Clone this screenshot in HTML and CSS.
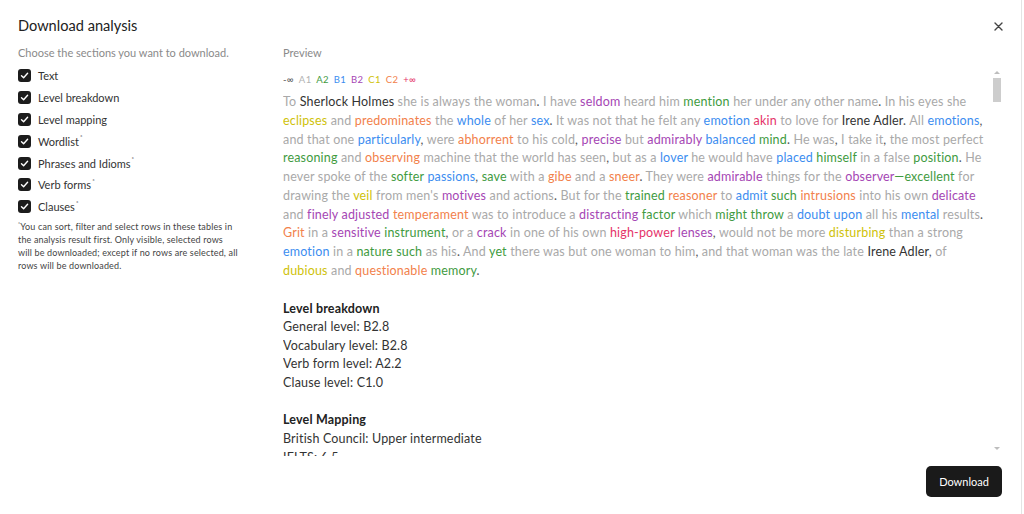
FILE: index.html
```html
<!DOCTYPE html>
<html lang="en">
<head>
<meta charset="utf-8">
<title>Download analysis</title>
<link rel="stylesheet" href="styles.css">
</head>
<body>
<div class="modal">
  <header class="head">
    <h1 class="title">Download analysis</h1>
    <button class="close" aria-label="Close">
      <svg width="9" height="9" viewBox="0 0 9 9"><path d="M1 1L8 8M8 1L1 8" stroke="#444" stroke-width="1.4" stroke-linecap="round"/></svg>
    </button>
  </header>
  <div class="body">
    <aside class="left">
      <p class="hint">Choose the sections you want to download.</p>
      <ul class="checks">
        <li><span class="box"><svg width="9" height="9" viewBox="0 0 9 9"><path d="M1.5 4.7L3.6 6.7L7.6 2.3" fill="none" stroke="#fff" stroke-width="1.4" stroke-linecap="round" stroke-linejoin="round"/></svg></span>Text</li>
        <li><span class="box"><svg width="9" height="9" viewBox="0 0 9 9"><path d="M1.5 4.7L3.6 6.7L7.6 2.3" fill="none" stroke="#fff" stroke-width="1.4" stroke-linecap="round" stroke-linejoin="round"/></svg></span>Level breakdown</li>
        <li><span class="box"><svg width="9" height="9" viewBox="0 0 9 9"><path d="M1.5 4.7L3.6 6.7L7.6 2.3" fill="none" stroke="#fff" stroke-width="1.4" stroke-linecap="round" stroke-linejoin="round"/></svg></span>Level mapping</li>
        <li><span class="box"><svg width="9" height="9" viewBox="0 0 9 9"><path d="M1.5 4.7L3.6 6.7L7.6 2.3" fill="none" stroke="#fff" stroke-width="1.4" stroke-linecap="round" stroke-linejoin="round"/></svg></span>Wordlist<sup>*</sup></li>
        <li><span class="box"><svg width="9" height="9" viewBox="0 0 9 9"><path d="M1.5 4.7L3.6 6.7L7.6 2.3" fill="none" stroke="#fff" stroke-width="1.4" stroke-linecap="round" stroke-linejoin="round"/></svg></span>Phrases and Idioms<sup>*</sup></li>
        <li><span class="box"><svg width="9" height="9" viewBox="0 0 9 9"><path d="M1.5 4.7L3.6 6.7L7.6 2.3" fill="none" stroke="#fff" stroke-width="1.4" stroke-linecap="round" stroke-linejoin="round"/></svg></span>Verb forms<sup>*</sup></li>
        <li><span class="box"><svg width="9" height="9" viewBox="0 0 9 9"><path d="M1.5 4.7L3.6 6.7L7.6 2.3" fill="none" stroke="#fff" stroke-width="1.4" stroke-linecap="round" stroke-linejoin="round"/></svg></span>Clauses<sup>*</sup></li>
      </ul>
      <p class="note"><sup>*</sup>You can sort, filter and select rows in these tables in<br>the analysis result first. Only visible, selected rows<br>will be downloaded; except if no rows are selected, all<br>rows will be downloaded.</p>
    </aside>
    <section class="right">
      <p class="hint">Preview</p>
      <div class="scroller">
        <div class="content">
          <div class="legend"><span class="ni">-∞</span> <span class="a1">A1</span> <span class="a2">A2</span> <span class="b1">B1</span> <span class="b2">B2</span> <span class="c1">C1</span> <span class="c2">C2</span> <span class="pi">+∞</span></div>
          <p class="text a1">To <span class="ni">Sherlock Holmes</span> she is always the woman<span class="pu">.</span> I have <span class="b2">seldom</span> heard him <span class="a2">mention</span> her under any other name<span class="pu">.</span> In his eyes she<br><span class="c1">eclipses</span> and <span class="c2">predominates</span> the <span class="b1">whole</span> of her <span class="b1">sex</span><span class="pu">.</span> It was not that he felt any <span class="b1">emotion</span> <span class="pi">akin</span> to love for <span class="ni">Irene Adler</span><span class="pu">.</span> All <span class="b1">emotions</span><span class="pu">,</span><br>and that one <span class="b1">particularly</span><span class="pu">,</span> were <span class="c2">abhorrent</span> to his cold<span class="pu">,</span> <span class="b2">precise</span> but <span class="b2">admirably</span> <span class="b1">balanced</span> <span class="a2">mind</span><span class="pu">.</span> He was<span class="pu">,</span> I take it<span class="pu">,</span> the most perfect<br><span class="a2">reasoning</span> and <span class="c2">observing</span> machine that the world has seen<span class="pu">,</span> but as a <span class="b1">lover</span> he would have <span class="b1">placed</span> <span class="a2">himself</span> in a false <span class="a2">position</span><span class="pu">.</span> He<br>never spoke of the <span class="a2">softer</span> <span class="b1">passions</span><span class="pu">,</span> <span class="a2">save</span> with a <span class="c2">gibe</span> and a <span class="c2">sneer</span><span class="pu">.</span> They were <span class="b2">admirable</span> things for the <span class="b2">observer</span><span class="a2">—excellent</span> for<br>drawing the <span class="c1">veil</span> from men's <span class="b2">motives</span> and actions<span class="pu">.</span> But for the <span class="a2">trained</span> <span class="c2">reasoner</span> to <span class="b1">admit</span> <span class="a2">such</span> <span class="c2">intrusions</span> into his own <span class="b2">delicate</span><br>and <span class="b2">finely adjusted</span> <span class="c2">temperament</span> was to introduce a <span class="b2">distracting</span> <span class="a2">factor</span> which <span class="a2">might throw</span> a <span class="b1">doubt upon</span> all his <span class="b1">mental</span> results<span class="pu">.</span><br><span class="c2">Grit</span> in a <span class="b2">sensitive</span> <span class="a2">instrument</span><span class="pu">,</span> or a <span class="b2">crack</span> in one of his own <span class="pi">high-power</span> <span class="b2">lenses</span><span class="pu">,</span> would not be more <span class="c1">disturbing</span> than a strong<br><span class="b1">emotion</span> in a <span class="a2">nature such</span> as his<span class="pu">.</span> And <span class="a2">yet</span> there was but one woman to him<span class="pu">,</span> and that woman was the late <span class="ni">Irene Adler</span><span class="pu">,</span> of<br><span class="c1">dubious</span> and <span class="c2">questionable</span> <span class="a2">memory</span><span class="pu">.</span></p>
          <h2 class="sub">Level breakdown</h2>
          <p class="line">General level: B2.8</p>
          <p class="line">Vocabulary level: B2.8</p>
          <p class="line">Verb form level: A2.2</p>
          <p class="line">Clause level: C1.0</p>
          <h2 class="sub">Level Mapping</h2>
          <p class="line">British Council: Upper intermediate</p>
          <p class="line">IELTS: 6.5</p>
          <p class="line">Cambridge: First (FCE)</p>
        </div>
        <div class="scrollbar">
          <span class="arrow up"></span>
          <span class="thumb"></span>
          <span class="arrow down"></span>
        </div>
      </div>
    </section>
  </div>
  <footer class="foot">
    <button class="download">Download</button>
  </footer>
</div>
</body>
</html>
```
FILE: styles.css
```css
* { box-sizing: border-box; }
html, body { margin: 0; padding: 0; background: #fff; }
body { font-family: "Lato", "Noto Sans", sans-serif; color: #333; }
p, h1, h2, ul { margin: 0; padding: 0; }

.modal {
  width: 1022px;
  height: 514px;
  border-right: 1px solid #e4e4e4;
  display: flex;
  flex-direction: column;
}

.head {
  display: flex;
  justify-content: space-between;
  align-items: flex-start;
  padding: 17px 17px 0 18px;
}
.title { font-size: 14.6px; font-weight: 400; line-height: 18px; color: #222; }
.close {
  border: 0; background: none; padding: 0; margin-top: 3px;
  width: 12px; height: 12px; display: flex; align-items: center; justify-content: center;
}

.body { display: flex; flex: 1; min-height: 0; padding-top: 10px; }
.left { width: 283px; padding-left: 18px; padding-right: 10px; }
.hint { font-size: 11px; line-height: 16px; color: #8a8a8a; }

.checks { list-style: none; margin-top: 4px; }
.checks li {
  display: flex; align-items: center; gap: 7px;
  height: 21.8px; font-size: 11px; color: #333;
}
.checks sup { font-size: 6px; align-self: flex-start; margin-top: 3px; margin-left: -6px; }
.box {
  width: 13px; height: 13px; border-radius: 3px; background: #1c1c1c;
  display: flex; align-items: center; justify-content: center;
}
.note { font-size: 9px; line-height: 13px; color: #444; margin-top: 0; letter-spacing: 0.15px; white-space: nowrap; }
.note sup { font-size: 5px; }

.right { flex: 1; display: flex; flex-direction: column; min-width: 0; padding-right: 18px; }
.scroller { position: relative; flex: 1; min-height: 0; overflow: hidden; margin-top: 2px; }
.content { padding-right: 8px; padding-top: 10px; }

.legend { font-size: 9.5px; line-height: 14px; letter-spacing: 0.4px; word-spacing: 2px; margin-bottom: 6px; }
.legend .ni { color: #555; }
.legend .a1 { color: #b3b3b3; }

.text { font-size: 12.5px; line-height: 18.75px; letter-spacing: 0.17px; }
.a1 { color: #a9a9a9; }
.a2 { color: #3f9b3f; }
.b1 { color: #3c8df0; }
.b2 { color: #a546b4; }
.c1 { color: #cfc20a; }
.c2 { color: #f2814b; }
.pi { color: #e5336a; }
.ni { color: #333; }
.pu { color: #555; }

.sub { font-size: 12.5px; font-weight: 700; line-height: 18.6px; color: #222; margin-top: 19px; letter-spacing: 0.17px; }
.line { font-size: 12.5px; line-height: 18.6px; color: #333; letter-spacing: 0.17px; }

.scrollbar {
  position: absolute; top: 0; right: 0; bottom: 0; width: 12px;
  display: flex; flex-direction: column; align-items: center;
}
.arrow { width: 0; height: 0; border-left: 3px solid transparent; border-right: 3px solid transparent; }
.arrow.up { border-bottom: 3px solid #bdbdbd; margin-top: 8px; }
.arrow.down { border-top: 3px solid #bdbdbd; margin-top: auto; margin-bottom: 6px; }
.thumb { width: 8px; height: 24px; background: #cdcdcd; margin-top: 4px; }

.foot { display: flex; justify-content: flex-end; padding: 10px 19px 17px; }
.download {
  background: #1a1a1a; color: #fff; border: 0; border-radius: 5px;
  font-family: inherit; font-size: 11px; width: 76px; height: 31px;
}
```
